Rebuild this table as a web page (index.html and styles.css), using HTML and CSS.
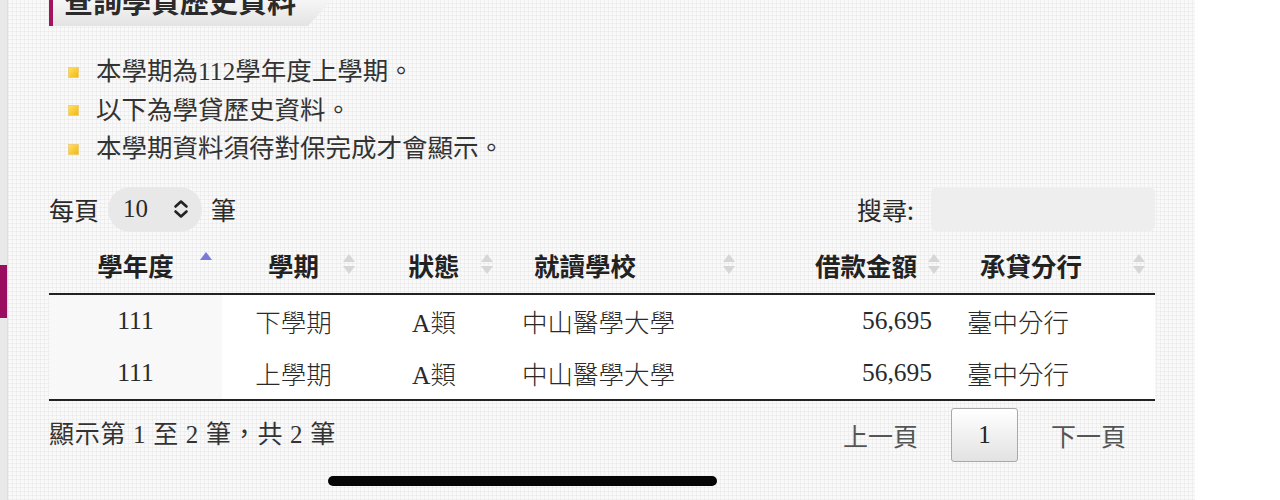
FILE: index.html
```html
<!DOCTYPE html>
<html lang="zh-Hant">
<head>
<meta charset="utf-8">
<link rel="stylesheet" href="styles.css">
</head>
<body>
<div class="page">
  <aside class="side"><div class="side-mark"></div></aside>
  <main class="panel">
    <h2 class="title">查詢學貸歷史資料</h2>
    <ul class="notes">
      <li>本學期為112學年度上學期。</li>
      <li>以下為學貸歷史資料。</li>
      <li>本學期資料須待對保完成才會顯示。</li>
    </ul>
    <div class="controls">
      <div class="length">
        <span>每頁</span>
        <span class="select"><span class="select-val">10</span>
          <svg class="chev" width="16" height="20" viewBox="0 0 16 20"><path d="M2.5 7.5 L8 2.5 L13.5 7.5 M2.5 12.5 L8 17.5 L13.5 12.5" fill="none" stroke="#222" stroke-width="2.6" stroke-linecap="round" stroke-linejoin="round"/></svg>
        </span>
        <span>筆</span>
      </div>
      <div class="search">
        <span>搜尋:</span>
        <span class="search-box"></span>
      </div>
    </div>
    <table class="grid">
      <colgroup>
        <col class="c1"><col class="c2"><col class="c3"><col class="c4"><col class="c5"><col class="c6">
      </colgroup>
      <thead>
        <tr>
          <th class="center">學年度<span class="sort asc"></span></th>
          <th class="center">學期<span class="sort"></span></th>
          <th class="center">狀態<span class="sort"></span></th>
          <th class="h-school">就讀學校<span class="sort"></span></th>
          <th class="h-amount">借款金額<span class="sort"></span></th>
          <th class="h-bank">承貸分行<span class="sort"></span></th>
        </tr>
      </thead>
      <tbody>
        <tr>
          <td class="center sorted">111</td>
          <td class="center">下學期</td>
          <td class="center">A類</td>
          <td class="d-school">中山醫學大學</td>
          <td class="d-amount">56,695</td>
          <td class="d-bank">臺中分行</td>
        </tr>
        <tr>
          <td class="center sorted">111</td>
          <td class="center">上學期</td>
          <td class="center">A類</td>
          <td class="d-school">中山醫學大學</td>
          <td class="d-amount">56,695</td>
          <td class="d-bank">臺中分行</td>
        </tr>
      </tbody>
    </table>
    <div class="footer">
      <div class="info">顯示第 1 至 2 筆，共 2 筆</div>
      <div class="pager">
        <span class="pg-link">上一頁</span>
        <span class="pg-btn">1</span>
        <span class="pg-link last">下一頁</span>
      </div>
    </div>
  </main>
  <div class="rest"></div>
  <div class="home-bar"></div>
</div>
</body>
</html>
```

FILE: styles.css
```css
html, body {
  margin: 0;
  padding: 0;
  background: #ffffff;
}
body {
  font-family: "Liberation Serif", "Noto Sans CJK TC", serif;
  color: #2a2a2a;
  overflow: hidden;
}
.page {
  position: relative;
  display: flex;
  width: 1280px;
  height: 500px;
  overflow: hidden;
}
.side {
  width: 8px;
  flex: none;
  background: #e9e9e9;
  border-right: 1px solid #dedede;
  box-sizing: border-box;
  padding-top: 265px;
}
.side-mark {
  width: 7px;
  height: 53px;
  background: #9b0d5f;
}
.panel {
  width: 1187px;
  flex: none;
  box-sizing: border-box;
  padding-left: 41px;
  padding-right: 40px;
  background-color: #f9f9f9;
  background-image:
    repeating-linear-gradient(0deg, rgba(0,0,0,0.035) 0 1px, transparent 1px 4px),
    repeating-linear-gradient(90deg, rgba(0,0,0,0.035) 0 1px, transparent 1px 4px);
}
.rest {
  flex: 1;
  background: #ffffff;
}
.title {
  margin: -26px 0 0 0;
  height: 52px;
  width: 306px;
  box-sizing: border-box;
  border-left: 4px solid #a3145f;
  padding-left: 11px;
  display: flex;
  align-items: center;
  font-family: "Noto Sans CJK TC", sans-serif;
  font-weight: 700;
  font-size: 29px;
  color: #2b2b2b;
  background: linear-gradient(180deg, #ffffff 0%, #f4f4f4 55%, #e3e3e3 100%);
  clip-path: polygon(0 0, 100% 0, calc(100% - 47px) 100%, 0 100%);
}
.notes {
  list-style: none;
  margin: 27px 0 0 0;
  padding: 0;
  font-size: 25.5px;
  line-height: 38.5px;
  color: #333;
}
.notes li {
  display: flex;
  align-items: center;
  gap: 17px;
  padding-left: 19px;
}
.notes li::before {
  content: "";
  width: 9px;
  height: 9px;
  border: 1px solid #f0cf7a;
  background: linear-gradient(135deg, #ffe066, #f2b90c);
  flex: none;
}
.controls {
  margin-top: 18px;
  height: 45px;
  display: flex;
  justify-content: space-between;
  align-items: center;
  font-size: 25px;
  color: #2a2a2a;
}
.length, .search {
  display: flex;
  align-items: center;
}
.length { gap: 9px; }
.select {
  width: 94px;
  height: 45px;
  box-sizing: border-box;
  border-radius: 23px;
  background: #e8e8e8;
  display: flex;
  align-items: center;
  justify-content: space-between;
  padding: 0 13px 0 15px;
}
.select-val { font-size: 25px; }
.search { gap: 17px; }
.search span:first-child {
  font-family: "Noto Sans CJK TC", sans-serif;
}
.search-box {
  width: 224px;
  height: 44px;
  border-radius: 6px;
  background: #eeeeee;
}
.grid {
  margin-top: 4px;
  width: 1106px;
  border-collapse: collapse;
  table-layout: fixed;
  font-size: 25.5px;
}
.c1 { width: 173px; }
.c2 { width: 143px; }
.c3 { width: 138px; }
.c4 { width: 242px; }
.c5 { width: 205px; }
.c6 { width: 205px; }
.grid th {
  position: relative;
  height: 57px;
  padding: 0;
  font-family: "Noto Sans CJK TC", sans-serif;
  font-weight: 700;
  color: #222;
  text-align: left;
  border-bottom: 2px solid #222;
  vertical-align: middle;
}
.grid td {
  height: 52px;
  padding: 0;
  background: #ffffff;
  color: #2a2a2a;
  font-weight: 300;
  vertical-align: middle;
}
.grid tbody tr:last-child td {
  border-bottom: 2px solid #222;
}
.grid td.sorted { background: #f8f8f8; }
.grid .center { text-align: center; }
.h-school { padding-left: 31px !important; }
.h-amount { text-align: right !important; padding-right: 33px !important; }
.h-bank { padding-left: 30px !important; }
.d-school { padding-left: 19px !important; }
.d-amount { text-align: right; padding-right: 18px !important; }
.d-bank { padding-left: 17px !important; }
.sort {
  position: absolute;
  right: 10px;
  top: 50%;
  width: 12px;
  height: 22px;
  margin-top: -11px;
}
.sort::before, .sort::after {
  content: "";
  position: absolute;
  left: 0;
  border-left: 6px solid transparent;
  border-right: 6px solid transparent;
}
.sort::before {
  top: 1px;
  border-bottom: 8px solid #d6d6d6;
}
.sort::after {
  bottom: 1px;
  border-top: 8px solid #d6d6d6;
}
.sort.asc::before { border-bottom-color: #7a78d8; top: -1px; }
.sort.asc::after { display: none; }
.footer {
  display: flex;
  justify-content: space-between;
  align-items: flex-start;
}
.info {
  margin-top: 13px;
  font-size: 25px;
  letter-spacing: 0.7px;
  color: #333;
}
.pager {
  margin-top: 7px;
  display: flex;
  align-items: center;
  font-size: 25px;
  color: #555;
  padding-right: 29px;
}
.pg-link { padding: 0 33px; }
.pg-link.last { padding-right: 0; }
.pg-btn {
  width: 67px;
  height: 54px;
  box-sizing: border-box;
  border: 1px solid #a8a8a8;
  border-radius: 3px;
  background: linear-gradient(180deg, #ffffff 0%, #e2e2e2 100%);
  display: flex;
  align-items: center;
  justify-content: center;
  color: #222;
}
.home-bar {
  position: absolute;
  left: 328px;
  top: 476px;
  width: 389px;
  height: 10px;
  border-radius: 5px;
  background: #050505;
}
```
